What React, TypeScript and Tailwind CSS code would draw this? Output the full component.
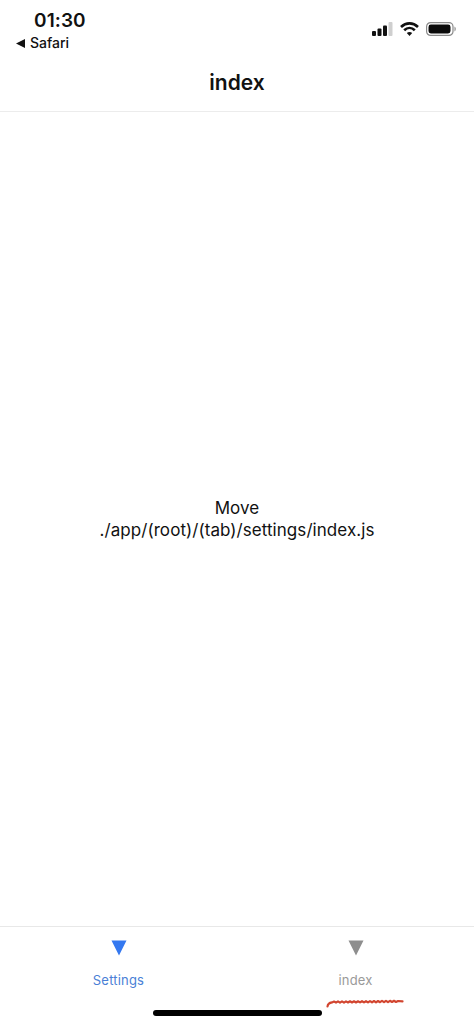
const font = { fontFamily: "Inter, 'Liberation Sans', sans-serif" };

function StatusIcons() {
  return (
    <div className="flex items-center gap-[7px]">
      <svg width="21" height="14" viewBox="0 0 21 14">
        <rect x="0" y="9" width="4" height="5" rx="1" fill="#111" />
        <rect x="5.5" y="6.5" width="4" height="7.5" rx="1" fill="#111" />
        <rect x="11" y="3.5" width="4" height="10.5" rx="1" fill="#111" />
        <rect x="16.5" y="0" width="4" height="14" rx="1" fill="#cfcfcf" />
      </svg>
      <svg width="19" height="14" viewBox="0 0 19 14" fill="none" stroke="#111" strokeWidth="2.6">
        <path d="M1 5 C6 0.2 13 0.2 18 5" />
        <path d="M4.2 8.2 C7.3 5.2 11.7 5.2 14.8 8.2" />
        <path d="M9.5 14 L6.8 11 C8.3 9.7 10.7 9.7 12.2 11 Z" fill="#111" stroke="none" />
      </svg>
      <svg width="30" height="14" viewBox="0 0 30 14">
        <rect x="0.6" y="0.6" width="26.4" height="12.8" rx="4" fill="none" stroke="#8a8a8a" strokeWidth="1.2" />
        <rect x="2.5" y="2.5" width="22" height="9" rx="2.4" fill="#0a0a0a" />
        <path d="M28.4 4.6 C29.4 5 29.9 5.9 29.9 7 C29.9 8.1 29.4 9 28.4 9.4 Z" fill="#a0a0a0" />
      </svg>
    </div>
  );
}

function TabItem({ label, triangle, text }: { label: string; triangle: string; text: string }) {
  return (
    <div className="flex-1 flex flex-col items-center pt-[13px]">
      <svg width="16" height="16" viewBox="0 0 16 16">
        <polygon points="0.5,0.5 15.5,0.5 8,15.5" fill={triangle} />
      </svg>
      <span className={`mt-[16px] text-[13px] leading-[16px] tracking-[0.2px] ${text}`}>{label}</span>
    </div>
  );
}

export default function App() {
  return (
    <div className="relative w-[474px] h-[1026px] bg-white flex flex-col overflow-hidden text-[#111]" style={font}>
      <header className="h-[112px] shrink-0 border-b border-[#ececec] flex flex-col">
        <div className="h-[60px] flex justify-between pl-[16px] pr-[18px]">
          <div className="flex flex-col pt-[9px]">
            <span className="ml-[18px] text-[19px] leading-[23px] font-semibold tracking-[0.1px]">01:30</span>
            <div className="flex items-center gap-[5px] mt-[3px]">
              <svg width="9" height="9" viewBox="0 0 9 9">
                <polygon points="0,4.5 9,0 9,9" fill="#111" />
              </svg>
              <span className="text-[14px] leading-[16px] font-medium">Safari</span>
            </div>
          </div>
          <div className="pt-[22px]">
            <StatusIcons />
          </div>
        </div>
        <h1 className="mt-[10px] text-center text-[21px] leading-[26px] font-semibold">index</h1>
      </header>

      <main className="flex-1 flex items-center justify-center">
        <p className="text-center text-[17px] leading-[22px] tracking-[0.06px]">
          Move
          <br />
          ./app/(root)/(tab)/settings/index.js
        </p>
      </main>

      <nav className="h-[100px] shrink-0 border-t border-[#e8e8e8] flex">
        <TabItem label="Settings" triangle="#3478f0" text="text-[#4a7fd6]" />
        <TabItem label="index" triangle="#8e8e8e" text="text-[#9a9a9a]" />
      </nav>

      {/* home indicator */}
      <div className="absolute left-[153px] bottom-[10px] w-[169px] h-[6px] rounded-full bg-black" />

      {/* red scribble under the tab label */}
      <svg className="absolute left-[326px] top-[998px]" width="78" height="11" viewBox="0 0 78 11" fill="none">
        <path
          d="M1.5 8.5 C1.8 5.4 3.5 4.8 6 4.4 L8 3.6 L10 4.6 L12 3.4 L14 4.6 L16 3.4 L18 4.6 L20 3.4 L22 4.5 L24 3.3 L26 4.5 L28 3.3 L30 4.5 L32 3.3 L34 4.4 L36 3.2 L38 4.4 L40 3.2 L42 4.4 L44 3.1 L46 4.3 L48 3 L50 4.3 L52 3 L54 4.2 L56 2.9 L58 4.2 L60 2.8 L62 4.1 L64 2.8 L66 4 L68 2.8 L70 4 L72 3 L76.5 3.4"
          stroke="#d2452f"
          strokeWidth="2.2"
          strokeLinecap="round"
          strokeLinejoin="round"
        />
      </svg>
    </div>
  );
}
